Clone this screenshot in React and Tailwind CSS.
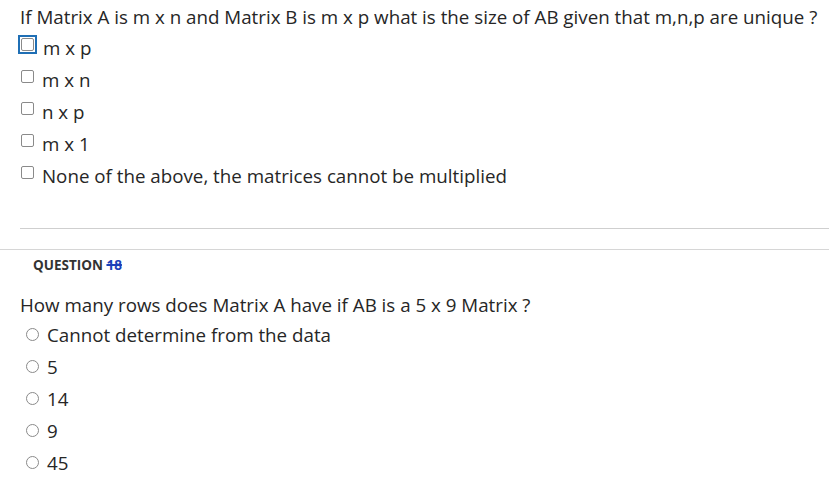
import React from 'react';

const q1Options = ['m x p', 'm x n', 'n x p', 'm x 1', 'None of the above, the matrices cannot be multiplied'];
const q2Options = ['Cannot determine from the data', '5', '14', '9', '45'];

const CheckRow = ({ label, focused }) => (
  <div className="h-8 flex items-start">
    {focused ? (
      <span className="ml-[18px] mt-[3px] block p-px border-2 border-[#1f6fb5]">
        <span className="block w-[13px] h-[13px] border border-[#8a8a8a] rounded-[2px] bg-white" />
      </span>
    ) : (
      <span className="ml-[21px] mt-[6px] block w-[13px] h-[13px] border border-[#8a8a8a] rounded-[2px] bg-white" />
    )}
    <span className={`${focused ? 'ml-[6px]' : 'ml-[8px]'} leading-8`}>{label}</span>
  </div>
);

const RadioRow = ({ label }) => (
  <div className="h-8 flex items-start">
    <span className="ml-[26px] mt-[9px] block w-[13px] h-[13px] rounded-full border border-[#8a8a8a] bg-white" />
    <span className="ml-[8px] leading-8">{label}</span>
  </div>
);

const App = () => {
  return (
    <div className="w-[829px] h-[493px] bg-white text-[#262626] text-[18.75px] font-['Open_Sans',sans-serif] overflow-hidden">
      {/* Question 1 */}
      <div className="pt-[5px] pl-5 leading-6 whitespace-nowrap">
        If Matrix A is m x n and Matrix B is m x p what is the size of AB given that m,n,p are unique ?
      </div>
      <div className="mt-[3px]">
        {q1Options.map((o, i) => (
          <CheckRow key={o} label={o} focused={i === 0} />
        ))}
      </div>

      <div className="mt-[36px] ml-5 h-px bg-[#cfcfcf]" />
      <div className="mt-[20px] h-px bg-[#d6d6d6]" />

      {/* Question 2 */}
      <div className="mt-[7px] pl-[33px] text-[13.5px] leading-4 font-bold text-[#333]">
        QUESTION <span className="text-[#1b3fb8] line-through decoration-2">18</span>
      </div>
      <div className="mt-[20px] pl-5 leading-6">
        How many rows does Matrix A have if AB is a 5 x 9 Matrix ?
      </div>
      <div className="mt-[2px]">
        {q2Options.map((o) => (
          <RadioRow key={o} label={o} />
        ))}
      </div>
    </div>
  );
};

export default App;
